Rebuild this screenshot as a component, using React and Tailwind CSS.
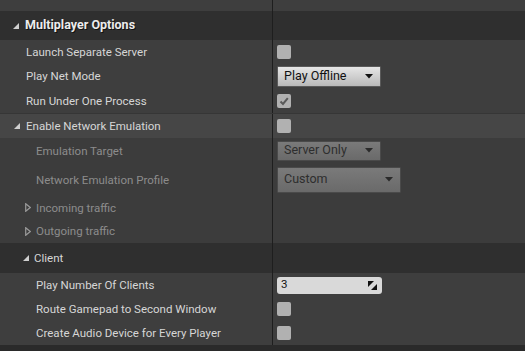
import React from 'react';

const font = { fontFamily: 'Roboto, "Noto Sans", sans-serif' };

function Tri({ className = '' }) {
    return (
        <svg width="6" height="6" viewBox="0 0 6 6" className={className}>
            <polygon points="6,0 6,6 0,6" fill="currentColor" />
        </svg>
    );
}

function HollowTri() {
    return (
        <svg width="6" height="9" viewBox="0 0 6 9" className="text-[#9a9a9a]">
            <polygon points="0.7,0.7 5.3,4.5 0.7,8.3" fill="none" stroke="currentColor" strokeWidth="1.2" />
        </svg>
    );
}

function Checkbox({ checked }) {
    return (
        <div className="w-[14px] h-[14px] rounded-[2px] bg-[#b1b1b1] flex items-center justify-center">
            {checked && (
                <svg width="10" height="10" viewBox="0 0 10 10">
                    <path d="M1.5 5.5 L4 8 L8.8 2.2" fill="none" stroke="#5a5a5a" strokeWidth="2" />
                </svg>
            )}
        </div>
    );
}

function Combo({ label, width, height, dim }) {
    return (
        <div
            className={`flex items-center justify-between pl-[6px] pr-[7px] rounded-[1px] border ${dim ? 'border-[#4a4a4a] bg-gradient-to-b from-[#7a7a7a] to-[#6a6a6a] text-[#2e2e2e]' : 'border-[#5a5a5a] bg-gradient-to-b from-[#e6e6e6] to-[#b9b9b9] text-[#111]'}`}
            style={{ width, height }}
        >
            <span className="text-[12.5px] leading-none">{label}</span>
            <svg width="8" height="5" viewBox="0 0 8 5">
                <polygon points="0,0 8,0 4,4.5" fill={dim ? '#2a2a2a' : '#111'} />
            </svg>
        </div>
    );
}

function Row({ h, bg = 'bg-[#3e3e3e]', left, right }) {
    return (
        <div className={`flex ${bg}`} style={{ height: h }}>
            <div className="w-[272px] flex items-center">{left}</div>
            <div className="w-px bg-[#1e1e1e]" />
            <div className="flex-1 flex items-center pl-[4px]">{right}</div>
        </div>
    );
}

export default function App() {
    const label = 'text-[11.5px] text-[#d6d6d6] translate-y-[1px]';
    const dimLabel = 'text-[11.5px] text-[#8c8c8c] translate-y-[1px]';
    return (
        <div className="w-[525px] h-[351px] overflow-hidden bg-[#3e3e3e] flex flex-col" style={font}>
            <Row h={11} bg="bg-[#3e3e3e]" />
            <Row
                h={29}
                bg="bg-[#2f2f2f]"
                left={
                    <div className="flex items-center pl-[13px] gap-[6px]">
                        <Tri className="text-[#cfcfcf]" />
                        <span className="text-[12.5px] font-bold text-[#ececec]" style={{ textShadow: '1px 1px 0 #111' }}>Multiplayer Options</span>
                    </div>
                }
            />
            <Row h={24} left={<span className={`pl-[26px] ${label}`}>Launch Separate Server</span>} right={<Checkbox />} />
            <Row h={24} left={<span className={`pl-[26px] ${label}`}>Play Net Mode</span>} right={<Combo label="Play Offline" width={104} height={21} />} />
            <Row h={25} left={<span className={`pl-[26px] ${label}`}>Run Under One Process</span>} right={<Checkbox checked />} />
            <div className="h-px bg-[#363636]" />
            <Row
                h={24}
                bg="bg-[#464646]"
                left={
                    <div className="flex items-center pl-[14px] gap-[6px]">
                        <Tri className="text-[#cfcfcf]" />
                        <span className={label}>Enable Network Emulation</span>
                    </div>
                }
                right={<Checkbox />}
            />
            <Row h={25} bg="bg-[#3c3c3c]" left={<span className={`pl-[36px] ${dimLabel}`}>Emulation Target</span>} right={<Combo label="Server Only" width={104} height={20} dim />} />
            <Row h={33} bg="bg-[#3c3c3c]" left={<span className={`pl-[36px] ${dimLabel}`}>Network Emulation Profile</span>} right={<Combo label="Custom" width={124} height={26} dim />} />
            <Row
                h={23}
                bg="bg-[#3c3c3c]"
                left={
                    <div className="flex items-center pl-[25px] gap-[5px]">
                        <HollowTri />
                        <span className={dimLabel}>Incoming traffic</span>
                    </div>
                }
            />
            <Row
                h={24}
                bg="bg-[#3c3c3c]"
                left={
                    <div className="flex items-center pl-[25px] gap-[5px]">
                        <HollowTri />
                        <span className={dimLabel}>Outgoing traffic</span>
                    </div>
                }
            />
            <Row
                h={30}
                bg="bg-[#2f2f2f]"
                left={
                    <div className="flex items-center pl-[23px] gap-[5px]">
                        <Tri className="text-[#cfcfcf]" />
                        <span className={label}>Client</span>
                    </div>
                }
            />
            <Row
                h={24}
                left={<span className={`pl-[36px] ${label}`}>Play Number Of Clients</span>}
                right={
                    <div className="w-[105px] h-[17px] rounded-[3px] bg-[#d9d9d9] flex items-center justify-between pl-[4px] pr-[5px]">
                        <span className="text-[11.5px] text-[#111] leading-none">3</span>
                        <svg width="9" height="9" viewBox="0 0 9 9">
                            <polygon points="0,0 6,0 0,6" fill="#111" />
                            <polygon points="9,3 9,9 3,9" fill="#111" />
                        </svg>
                    </div>
                }
            />
            <Row h={23} left={<span className={`pl-[36px] ${label}`}>Route Gamepad to Second Window</span>} right={<Checkbox />} />
            <Row h={25} left={<span className={`pl-[36px] ${label}`}>Create Audio Device for Every Player</span>} right={<Checkbox />} />
            <div className="flex-1 bg-[#2a2a2a]" />
        </div>
    );
}
